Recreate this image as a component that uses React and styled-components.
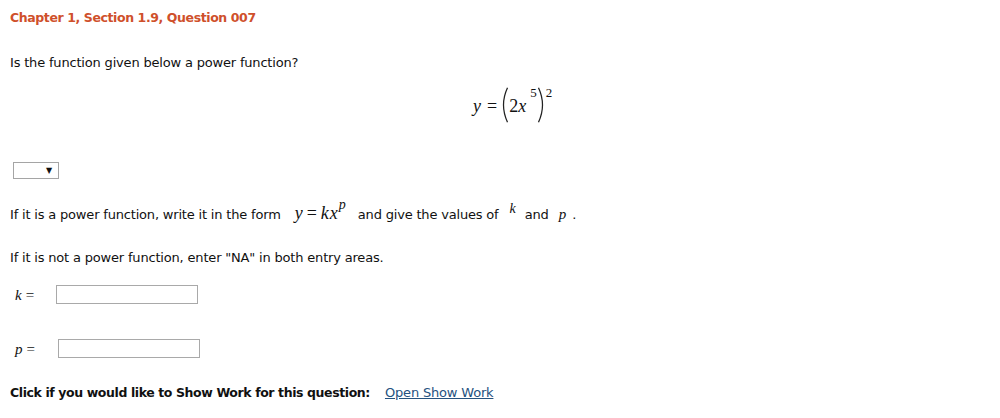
import React from "react";
import styled, { createGlobalStyle } from "styled-components";

const Global = createGlobalStyle`
  html, body { margin: 0; padding: 0; background: #fff; }
  body {
    font-family: "DejaVu Sans", Verdana, sans-serif;
    font-size: 13px;
    letter-spacing: -0.18px;
    color: #111;
  }
`;

const Page = styled.div`
  padding: 10px 10px 0 10px;
  display: flex;
  flex-direction: column;
  align-items: flex-start;
`;

const Heading = styled.div`
  font-weight: bold;
  color: #cf502b;
  font-size: 12.5px;
  letter-spacing: -0.4px;
  line-height: 16px;
  height: 16px;
`;

const Para = styled.div`
  line-height: 16px;
  height: 16px;
  margin-top: ${(p) => p.$mt}px;
  white-space: nowrap;
`;

const Equation = styled.div`
  margin: 16px 0 0 463px;
  height: 36px;
  display: flex;
  align-items: center;
  font-family: "Liberation Serif", "Times New Roman", serif;
  letter-spacing: 0;
  color: #111;
  white-space: nowrap;
`;

const EqText = styled.span`
  font-size: 18px;
  line-height: 18px;
  font-style: ${(p) => (p.$it ? "italic" : "normal")};
  margin-left: ${(p) => p.$ml || 0}px;
  margin-top: 2px;
`;

const EqSup = styled.span`
  align-self: flex-start;
  font-size: 13px;
  line-height: 13px;
  margin-left: ${(p) => p.$ml || 0}px;
  margin-top: -1px;
`;

const ParenSvg = styled.svg`
  width: 9px;
  height: 36px;
  margin-left: ${(p) => p.$ml || 0}px;
  flex: none;
`;

function Paren({ right, ml }) {
  const d = right ? "M1.5 0.8 Q9.5 18 1.5 35.2" : "M7.5 0.8 Q-0.5 18 7.5 35.2";
  return (
    <ParenSvg $ml={ml} viewBox="0 0 9 36">
      <path d={d} fill="none" stroke="#222" strokeWidth="1.25" />
    </ParenSvg>
  );
}

const SelectBox = styled.div`
  margin-top: 39px;
  margin-left: 3px;
  width: 46px;
  height: 17px;
  box-sizing: border-box;
  border: 1px solid #a5a5a5;
  background: #fff;
  display: flex;
  align-items: center;
  justify-content: flex-end;
  padding-right: 6px;
  font-size: 8px;
  color: #111;
`;

const Serif = styled.span`
  font-family: "Liberation Serif", "Times New Roman", serif;
  font-style: ${(p) => (p.$it ? "italic" : "normal")};
  font-size: ${(p) => p.$size || 17}px;
  line-height: 0;
  letter-spacing: ${(p) => p.$ls || 0}px;
  margin: 0 ${(p) => p.$mr || 0}px 0 ${(p) => p.$ml || 0}px;
  vertical-align: ${(p) => p.$raise || 0}px;
`;

const FieldRow = styled.div`
  display: flex;
  align-items: center;
  margin-top: ${(p) => p.$mt}px;
  padding-left: 5px;
`;

const FieldLabel = styled.span`
  width: ${(p) => p.$w}px;
  display: flex;
  align-items: baseline;
  gap: 4px;
  white-space: nowrap;
  line-height: 16px;
`;

const TextInput = styled.input`
  width: 142px;
  height: 19px;
  box-sizing: border-box;
  border: 1px solid #a9a9a9;
  padding: 0 2px;
  margin: 0;
  font-size: 12px;
`;

const Footer = styled.div`
  margin-top: 27px;
  line-height: 16px;
  white-space: nowrap;
  display: flex;
  align-items: baseline;
  gap: 15px;
`;

const BoldText = styled.span`
  font-weight: bold;
  font-size: 12.5px;
  letter-spacing: -0.4px;
`;

const Link = styled.a`
  color: #25527f;
  text-decoration: underline;
  cursor: pointer;
`;

export default function App() {
  return (
    <>
      <Global />
      <Page>
        <Heading>Chapter 1, Section 1.9, Question 007</Heading>
        <Para $mt={29}>Is the function given below a power function?</Para>
        <Equation>
          <EqText $it>y</EqText>
          <EqText $ml={6}>=</EqText>
          <Paren ml={3} />
          <EqText>2</EqText>
          <EqText $it>x</EqText>
          <EqSup $ml={4}>5</EqSup>
          <Paren right ml={0} />
          <EqSup>2</EqSup>
        </Equation>
        <SelectBox>▼</SelectBox>
        <Para $mt={26}>
          If it is a power function, write it in the form
          <Serif $it $ml={14} $size={18}>y</Serif>
          <Serif $ml={4} $mr={4} $size={18}>=</Serif>
          <Serif $it $size={18} $ls={1}>kx</Serif>
          <Serif $it $size={14} $raise={10} $mr={12}>p</Serif>
          and give the values of
          <Serif $it $size={14} $raise={6} $ml={11} $mr={9}>k</Serif>
          and
          <Serif $it $size={15} $ml={10} $mr={6}>p</Serif>
          .
        </Para>
        <Para $mt={29}>If it is not a power function, enter "NA" in both entry areas.</Para>
        <FieldRow $mt={19}>
          <FieldLabel $w={41}>
            <Serif $it $size={15}>k</Serif>
            <Serif $size={15}>=</Serif>
          </FieldLabel>
          <TextInput type="text" />
        </FieldRow>
        <FieldRow $mt={35}>
          <FieldLabel $w={43}>
            <Serif $it $size={15}>p</Serif>
            <Serif $size={15}>=</Serif>
          </FieldLabel>
          <TextInput type="text" />
        </FieldRow>
        <Footer>
          <BoldText>Click if you would like to Show Work for this question:</BoldText>
          <Link>Open Show Work</Link>
        </Footer>
      </Page>
    </>
  );
}
